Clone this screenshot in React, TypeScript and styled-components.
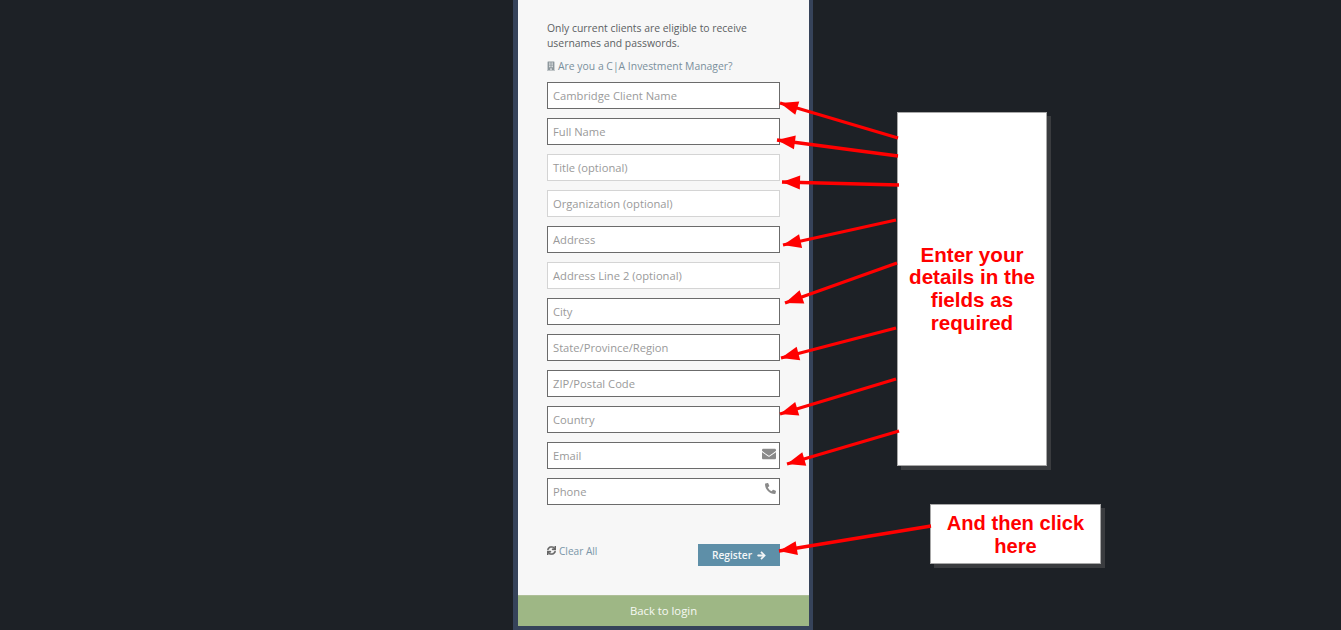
import React from "react";
import styled, { createGlobalStyle } from "styled-components";
import { FaBuilding, FaEnvelope, FaPhoneAlt, FaSync, FaArrowRight } from "react-icons/fa";

const Global = createGlobalStyle`
  html, body { margin: 0; padding: 0; height: 630px; overflow: hidden; background: #1d2126; }
  * { box-sizing: border-box; }
`;

const Page = styled.div`
  position: relative;
  width: 1341px;
  height: 630px;
  overflow: hidden;
  background: #1d2126;
  font-family: "Open Sans", "Noto Sans", sans-serif;
`;

const Panel = styled.main`
  width: 300px;
  height: 630px;
  margin-left: 513px;
  border-left: 5px solid #36435a;
  border-right: 4px solid #36435a;
  border-bottom: 4px solid #36435a;
  background: #f7f7f7;
  display: flex;
  flex-direction: column;
`;

const Body = styled.div`
  flex: 1;
  padding: 21px 29px 0;
  display: flex;
  flex-direction: column;
`;

const Intro = styled.p`
  margin: 0;
  font-size: 10.4px;
  line-height: 15px;
  color: #5c5f63;
`;

const ManagerLink = styled.a`
  display: flex;
  align-items: center;
  gap: 3px;
  margin-top: 7px;
  height: 15px;
  font-size: 10.4px;
  color: #7a8f9c;
  svg { color: #8d979c; width: 8px; height: 10px; }
`;

const Fields = styled.div`
  margin-top: 9px;
  display: flex;
  flex-direction: column;
  gap: 9px;
`;

const Field = styled.div<{ $required: boolean }>`
  position: relative;
  width: 233px;
  height: 27px;
  display: flex;
  align-items: center;
  padding: 0 5px;
  background: #fff;
  border: 1px solid ${(p) => (p.$required ? "#6b6b6b" : "#d4d4d4")};
  font-size: 11.2px;
  color: #9a9a9a;
`;

const FieldIcon = styled.span<{ $size: number }>`
  position: absolute;
  right: 3px;
  top: 4px;
  display: flex;
  color: #8a8a8a;
  svg { width: ${(p) => p.$size}px; height: ${(p) => p.$size}px; }
`;

const Actions = styled.div`
  width: 233px;
  margin-top: 39px;
  display: flex;
  justify-content: space-between;
  align-items: flex-start;
`;

const ClearAll = styled.a`
  display: flex;
  align-items: center;
  gap: 3px;
  height: 15px;
  margin-top: -1px;
  font-size: 10.1px;
  color: #7a96a8;
  svg { color: #666; width: 9px; height: 9px; stroke: #666; stroke-width: 25px; }
`;

const RegisterButton = styled.button`
  width: 82px;
  height: 22px;
  margin: 0;
  padding: 0;
  border: 0;
  display: flex;
  align-items: center;
  justify-content: center;
  gap: 5px;
  background: #5e8fa8;
  color: #f4f7f8;
  font-family: inherit;
  font-size: 10.2px;
  font-weight: 600;
  svg { width: 9px; height: 9px; stroke: #f4f7f8; stroke-width: 30px; }
`;

const BackBar = styled.a`
  height: 31px;
  padding-bottom: 2px;
  display: flex;
  align-items: center;
  justify-content: center;
  background: #9eb785;
  border-top: 1px solid #aebf98;
  color: #f7f9f4;
  font-size: 11.3px;
`;

const Callout = styled.div<{ $x: number; $y: number; $w: number; $h: number; $size: number; $nudge: number }>`
  position: absolute;
  left: ${(p) => p.$x}px;
  top: ${(p) => p.$y}px;
  width: ${(p) => p.$w}px;
  height: ${(p) => p.$h}px;
  padding-top: ${(p) => p.$nudge}px;
  display: flex;
  align-items: center;
  justify-content: center;
  text-align: center;
  background: #fff;
  border: 1px solid #a8a8a8;
  box-shadow: 4px 4px 0 #3a3c3f;
  color: #ff0000;
  font-family: "Liberation Sans", Arial, sans-serif;
  font-weight: 700;
  font-size: ${(p) => p.$size}px;
  line-height: 22.6px;
`;

const ArrowLayer = styled.svg`
  position: absolute;
  left: 0;
  top: 0;
  pointer-events: none;
`;

const arrows: [number, number, number, number][] = [
  [898, 138, 780, 103],
  [898, 156, 777, 140],
  [899, 185, 782, 182],
  [896, 220, 783, 245],
  [897, 263, 785, 303],
  [896, 328, 781, 358],
  [896, 379, 780, 414],
  [899, 431, 787, 464],
  [931, 526, 779, 551],
];

function arrowHead(x1: number, y1: number, x2: number, y2: number) {
  const dx = x1 - x2;
  const dy = y1 - y2;
  const l = Math.hypot(dx, dy);
  const ux = dx / l;
  const uy = dy / l;
  const bx = x2 + ux * 18;
  const by = y2 + uy * 18;
  const nx = -uy * 7;
  const ny = ux * 7;
  return `${x2},${y2} ${bx + nx},${by + ny} ${bx - nx},${by - ny}`;
}

const fields = [
  { label: "Cambridge Client Name", required: true },
  { label: "Full Name", required: true },
  { label: "Title (optional)", required: false },
  { label: "Organization (optional)", required: false },
  { label: "Address", required: true },
  { label: "Address Line 2 (optional)", required: false },
  { label: "City", required: true },
  { label: "State/Province/Region", required: true },
  { label: "ZIP/Postal Code", required: true },
  { label: "Country", required: true },
  { label: "Email", required: true, icon: <FaEnvelope />, size: 14 },
  { label: "Phone", required: true, icon: <FaPhoneAlt />, size: 11 },
];

export default function App() {
  return (
    <Page>
      <Global />
      <Panel>
        <Body>
          <Intro>
            Only current clients are eligible to receive
            <br />
            usernames and passwords.
          </Intro>
          <ManagerLink>
            <FaBuilding />
            Are you a C|A Investment Manager?
          </ManagerLink>
          <Fields>
            {fields.map((f) => (
              <Field key={f.label} $required={f.required}>
                {f.label}
                {f.icon && <FieldIcon $size={f.size}>{f.icon}</FieldIcon>}
              </Field>
            ))}
          </Fields>
          <Actions>
            <ClearAll>
              <FaSync />
              Clear All
            </ClearAll>
            <RegisterButton>
              Register
              <FaArrowRight />
            </RegisterButton>
          </Actions>
        </Body>
        <BackBar>Back to login</BackBar>
      </Panel>
      <Callout $x={897} $y={112} $w={150} $h={354} $size={20.6} $nudge={0}>
        Enter your
        <br />
        details in the
        <br />
        fields as
        <br />
        required
      </Callout>
      <Callout $x={930} $y={504} $w={171} $h={60} $size={20.1} $nudge={2}>
        And then click
        <br />
        here
      </Callout>
      <ArrowLayer width="1341" height="630" viewBox="0 0 1341 630">
        {arrows.map(([x1, y1, x2, y2]) => (
          <g key={`${x2}-${y2}`}>
            <line x1={x1} y1={y1} x2={x2} y2={y2} stroke="#ff0000" strokeWidth="3.3" />
            <polygon points={arrowHead(x1, y1, x2, y2)} fill="#ff0000" />
          </g>
        ))}
      </ArrowLayer>
    </Page>
  );
}
